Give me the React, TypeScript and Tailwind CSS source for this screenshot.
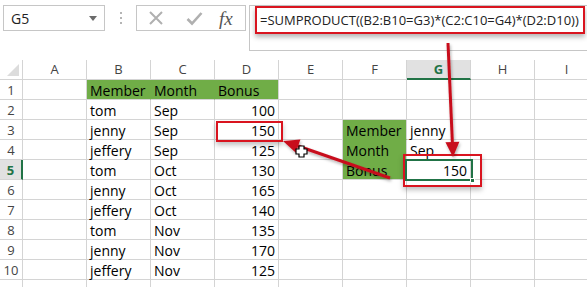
import React from "react";

const cols = ["A", "B", "C", "D", "E", "F", "G", "H", "I"];

// sheet content, keyed by column letter
const rows: Record<string, string>[] = [
  { B: "Member", C: "Month", D: "Bonus" },
  { B: "tom", C: "Sep", D: "100" },
  { B: "jenny", C: "Sep", D: "150", F: "Member", G: "jenny" },
  { B: "jeffery", C: "Sep", D: "125", F: "Month", G: "Sep" },
  { B: "tom", C: "Oct", D: "130", F: "Bonus", G: "150" },
  { B: "jenny", C: "Oct", D: "165" },
  { B: "jeffery", C: "Oct", D: "140" },
  { B: "tom", C: "Nov", D: "135" },
  { B: "jenny", C: "Nov", D: "170" },
  { B: "jeffery", C: "Nov", D: "125" },
  {},
];

const isGreen = (r: number, c: string) =>
  (r === 1 && ["B", "C", "D"].includes(c)) ||
  ([3, 4, 5].includes(r) && c === "F");

const Cell = ({ r, c }: { r: number; c: string }) => {
  const value = rows[r - 1][c] ?? "";
  const green = isGreen(r, c);
  const numeric = /^\d+$/.test(value);
  // filled cells hide the gridline to their inner neighbour
  const rightGreen = green && r === 1 && c !== "D";
  const bottomGreen = green && c === "F" && r !== 5;
  return (
    <div
      className={`h-[20px] border-r border-b overflow-visible whitespace-nowrap px-[3px] pt-[2px] text-[14px] leading-[18px] text-black ${
        numeric ? "text-right" : "text-left"
      } ${green ? "bg-[#70ad47]" : "bg-white"} ${
        rightGreen ? "border-r-[#70ad47]" : "border-r-[#d4d4d4]"
      } ${bottomGreen ? "border-b-[#70ad47]" : "border-b-[#d4d4d4]"}`}
    >
      {value}
    </div>
  );
};

const Toolbar = () => (
  <div className="relative h-[60px] bg-white">
    <div className="flex items-start pt-[5px] pl-[3px]">
      {/* Name box */}
      <div className="flex h-[26px] w-[102px] items-center justify-between border border-[#c6c6c6] bg-white pl-[7px] pr-[7px] text-[14px] text-[#222]">
        <span>G5</span>
        <svg width="8" height="5" viewBox="0 0 8 5">
          <path d="M0 0 L8 0 L4 5 Z" fill="#6b6b6b" />
        </svg>
      </div>
      <div className="flex h-[26px] w-[31px] flex-col items-center justify-center gap-[3px]">
        <div className="h-[2px] w-[2px] bg-[#b5b5b5]" />
        <div className="h-[2px] w-[2px] bg-[#b5b5b5]" />
        <div className="h-[2px] w-[2px] bg-[#b5b5b5]" />
      </div>
      {/* Cancel / enter / fx */}
      <div className="flex h-[26px] w-[110px] items-center border border-[#c6c6c6] bg-white pl-[11px]">
        <svg width="16" height="16" viewBox="0 0 16 16">
          <path d="M2 2 L14 14 M14 2 L2 14" stroke="#b0b0b0" strokeWidth="2" />
        </svg>
        <svg className="ml-[22px]" width="17" height="16" viewBox="0 0 17 16">
          <path d="M1.5 9 L6 13.5 L15.5 3" stroke="#b0b0b0" strokeWidth="2.6" fill="none" />
        </svg>
        <span className="ml-[16px] font-['Liberation_Serif',serif] text-[19px] italic leading-none text-[#555]">
          fx
        </span>
      </div>
      {/* Formula field */}
      <div className="ml-[3px] h-[46px] flex-1 border-t border-l border-b border-[#c6c6c6] bg-white pl-[5px] pt-0">
        <div className="h-[28px] w-[330px] border-2 border-[#d9141f] pl-[3px] text-[13px] leading-[24px] text-[#222] shadow-[0_3px_5px_rgba(0,0,0,0.3)] whitespace-nowrap">
          =SUMPRODUCT((B2:B10=G3)*(C2:C10=G4)*(D2:D10))
        </div>
      </div>
    </div>
  </div>
);

export default function App() {
  return (
    <div className="relative h-[287px] w-[587px] overflow-hidden bg-white font-['Open_Sans',sans-serif]">
      <Toolbar />

      <div className="grid grid-cols-[23px_repeat(9,64px)]">
        {/* column headers */}
        <div className="relative h-[20px] border-r border-b border-[#d4d4d4] bg-white">
          <svg className="absolute right-[3px] bottom-[3px]" width="12" height="12" viewBox="0 0 12 12">
            <path d="M12 0 L12 12 L0 12 Z" fill="#dcdcdc" />
          </svg>
        </div>
        {cols.map((c) => (
          <div
            key={c}
            className={`h-[20px] border-r border-r-[#d4d4d4] text-center text-[13px] leading-[19px] ${
              c === "G"
                ? "border-b-2 border-b-[#217346] bg-[#e1e1e1] font-bold text-[#217346]"
                : "border-b border-b-[#d4d4d4] text-[#444]"
            }`}
          >
            {c}
          </div>
        ))}

        {rows.map((_, i) => {
          const r = i + 1;
          return (
            <React.Fragment key={r}>
              <div
                className={`h-[20px] border-b border-b-[#d4d4d4] text-center text-[13px] leading-[20px] ${
                  r === 5
                    ? "border-r-2 border-r-[#217346] bg-[#e1e1e1] font-bold text-[#217346]"
                    : "border-r border-r-[#d4d4d4] text-[#444]"
                }`}
              >
                {r <= 10 ? r : ""}
              </div>
              {cols.map((c) => (
                <Cell key={c} r={r} c={c} />
              ))}
            </React.Fragment>
          );
        })}
      </div>

      {/* active cell G5 */}
      <div className="absolute left-[405px] top-[159px] h-[22px] w-[68px] border-2 border-[#217346]" />
      <div className="absolute left-[470px] top-[178px] h-[5px] w-[5px] border border-white bg-[#217346]" />

      {/* callout boxes */}
      <div className="absolute left-[403px] top-[154px] h-[33px] w-[79px] border-2 border-[#d9141f] shadow-[0_3px_5px_rgba(0,0,0,0.25)]" />
      <div className="absolute left-[216px] top-[121px] h-[21px] w-[67px] border-2 border-[#d9141f] shadow-[0_3px_5px_rgba(0,0,0,0.25)]" />

      {/* arrows */}
      <svg className="absolute left-0 top-0" width="587" height="287" viewBox="0 0 587 287">
        <defs>
          <filter id="sh" x="-20%" y="-20%" width="140%" height="140%">
            <feDropShadow dx="1" dy="2" stdDeviation="1.5" floodColor="#000" floodOpacity="0.3" />
          </filter>
        </defs>
        <g filter="url(#sh)" fill="#c8101c" stroke="#c8101c">
          <line x1="448" y1="43" x2="452.4" y2="143" strokeWidth="3" />
          <path d="M453 157 L459.4 141.7 L445.4 142.3 Z" stroke="none" />
          <line x1="390" y1="178" x2="298" y2="146" strokeWidth="3" />
          <path d="M283 141 L300.4 139.6 L295.8 152.8 Z" stroke="none" />
        </g>
        {/* move cursor */}
        <path
          d="M299 146 h5 v3 h3 v5 h-3 v3 h-5 v-3 h-3 v-5 h3 Z"
          fill="#fff"
          stroke="#000"
          strokeWidth="1.2"
        />
      </svg>
    </div>
  );
}
